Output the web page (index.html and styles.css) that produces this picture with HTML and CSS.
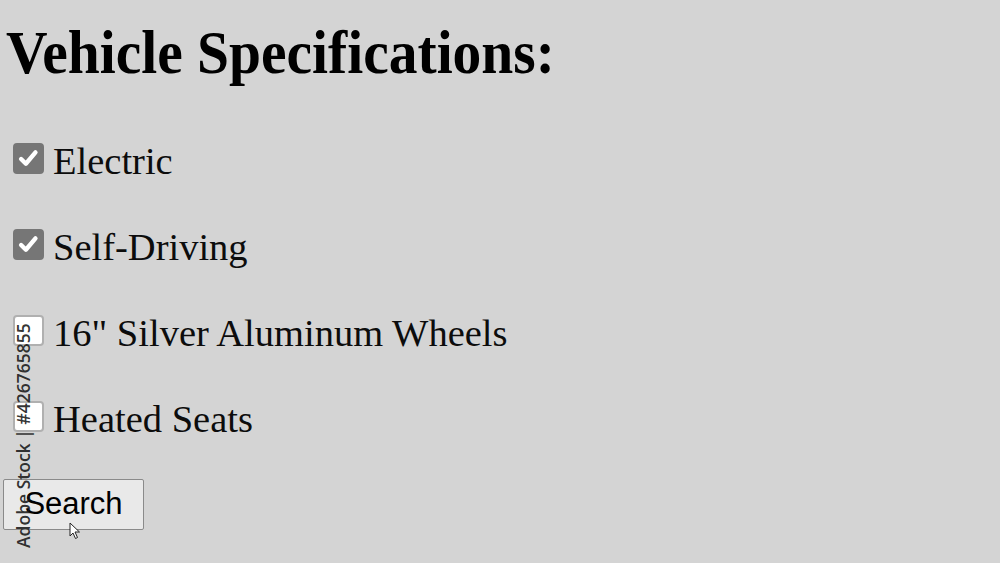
FILE: index.html
```html
<!DOCTYPE html>
<html>
<head>
<meta charset="utf-8">
<link rel="stylesheet" href="styles.css">
</head>
<body>
<main class="page">
  <h1 class="title">Vehicle Specifications:</h1>
  <div class="options">
    <label class="row"><input type="checkbox" class="box" checked><span class="text">Electric</span></label>
    <label class="row"><input type="checkbox" class="box" checked><span class="text">Self-Driving</span></label>
    <label class="row"><input type="checkbox" class="box"><span class="text">16" Silver Aluminum Wheels</span></label>
    <label class="row"><input type="checkbox" class="box"><span class="text">Heated Seats</span></label>
  </div>
  <button class="search">Search</button>
</main>
<div class="stamp">Adobe Stock | #426765855</div>
<svg class="cursor" width="12" height="18" viewBox="0 0 12 18"><path d="M1 1 L1 14 L4 11 L6.5 16.5 L8.5 15.5 L6 10 L10.5 10 Z" fill="#fff" stroke="#222" stroke-width="1"/></svg>
</body>
</html>
```

FILE: styles.css
```css
html, body {
  margin: 0;
  padding: 0;
  background: #d4d4d4;
  width: 1000px;
  height: 563px;
  overflow: hidden;
}
.page {
  display: flex;
  flex-direction: column;
  align-items: flex-start;
  padding-top: 21px;
}
.title {
  margin: 0 0 54.5px 6px;
  font-family: "Liberation Serif", serif;
  font-weight: bold;
  font-size: 57.5px;
  line-height: 65px;
  color: #000;
  transform: scaleY(1.06);
  transform-origin: 0 52px;
}
.options {
  display: flex;
  flex-direction: column;
  gap: 46px;
}
.row {
  display: flex;
  align-items: baseline;
  height: 40px;
  font-family: "Liberation Serif", serif;
  font-size: 38.5px;
  line-height: 40px;
  color: #0c0c0c;
}
.box {
  appearance: none;
  -webkit-appearance: none;
  margin: 0 9px 0 13px;
  width: 31px;
  height: 31px;
  box-sizing: border-box;
  border: 2px solid #b0b0b0;
  border-radius: 4px;
  background: #fff;
}
.box:checked {
  border-color: #767676;
  background-color: #767676;
  background-image: url("data:image/svg+xml,%3Csvg xmlns='http://www.w3.org/2000/svg' viewBox='0 0 31 31'%3E%3Cpath d='M7 16 L12.5 21.5 L23.5 8.5' fill='none' stroke='white' stroke-width='5' stroke-linecap='round' stroke-linejoin='round'/%3E%3C/svg%3E");
  background-size: 100% 100%;
}
.search {
  margin: 40px 0 0 3px;
  width: 141px;
  height: 51px;
  padding: 0;
  font-family: "Liberation Sans", Arial, sans-serif;
  font-size: 31px;
  color: #000;
  background: #e9e9e9;
  border: 1px solid #8a8a8a;
  border-radius: 2px;
}
.stamp {
  position: absolute;
  left: 12px;
  top: 548px;
  transform: rotate(-90deg);
  transform-origin: 0 0;
  white-space: nowrap;
  font-family: "Open Sans", sans-serif;
  font-weight: 600;
  font-size: 17.5px;
  line-height: 22px;
  color: rgba(25, 25, 25, 0.9);
}
.cursor {
  position: absolute;
  left: 69px;
  top: 522px;
}
```
